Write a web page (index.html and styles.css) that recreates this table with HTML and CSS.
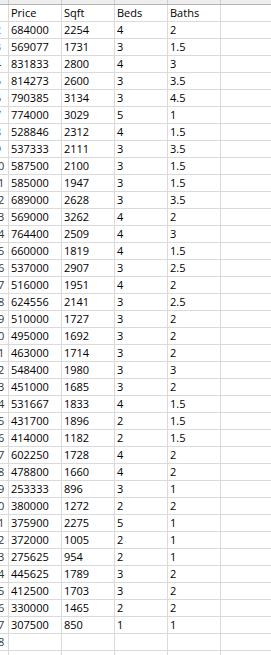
FILE: index.html
```html
<!DOCTYPE html>
<html>
<head>
<meta charset="utf-8">
<link rel="stylesheet" href="styles.css">
</head>
<body>
<div class="sheet">
  <div class="row strip"><div class="rn"></div><div class="c"></div><div class="c"></div><div class="c"></div><div class="c"></div><div class="c last"></div></div>
  <div class="row"><div class="rn"><span>1</span></div><div class="c">Price</div><div class="c">Sqft</div><div class="c">Beds</div><div class="c">Baths</div><div class="c last"></div></div>
  <div class="row"><div class="rn"><span>2</span></div><div class="c">684000</div><div class="c">2254</div><div class="c">4</div><div class="c">2</div><div class="c last"></div></div>
  <div class="row"><div class="rn"><span>3</span></div><div class="c">569077</div><div class="c">1731</div><div class="c">3</div><div class="c">1.5</div><div class="c last"></div></div>
  <div class="row"><div class="rn"><span>4</span></div><div class="c">831833</div><div class="c">2800</div><div class="c">4</div><div class="c">3</div><div class="c last"></div></div>
  <div class="row"><div class="rn"><span>5</span></div><div class="c">814273</div><div class="c">2600</div><div class="c">3</div><div class="c">3.5</div><div class="c last"></div></div>
  <div class="row"><div class="rn"><span>6</span></div><div class="c">790385</div><div class="c">3134</div><div class="c">3</div><div class="c">4.5</div><div class="c last"></div></div>
  <div class="row"><div class="rn"><span>7</span></div><div class="c">774000</div><div class="c">3029</div><div class="c">5</div><div class="c">1</div><div class="c last"></div></div>
  <div class="row"><div class="rn"><span>8</span></div><div class="c">528846</div><div class="c">2312</div><div class="c">4</div><div class="c">1.5</div><div class="c last"></div></div>
  <div class="row"><div class="rn"><span>9</span></div><div class="c">537333</div><div class="c">2111</div><div class="c">3</div><div class="c">3.5</div><div class="c last"></div></div>
  <div class="row"><div class="rn"><span>10</span></div><div class="c">587500</div><div class="c">2100</div><div class="c">3</div><div class="c">1.5</div><div class="c last"></div></div>
  <div class="row"><div class="rn"><span>11</span></div><div class="c">585000</div><div class="c">1947</div><div class="c">3</div><div class="c">1.5</div><div class="c last"></div></div>
  <div class="row"><div class="rn"><span>12</span></div><div class="c">689000</div><div class="c">2628</div><div class="c">3</div><div class="c">3.5</div><div class="c last"></div></div>
  <div class="row"><div class="rn"><span>13</span></div><div class="c">569000</div><div class="c">3262</div><div class="c">4</div><div class="c">2</div><div class="c last"></div></div>
  <div class="row"><div class="rn"><span>14</span></div><div class="c">764400</div><div class="c">2509</div><div class="c">4</div><div class="c">3</div><div class="c last"></div></div>
  <div class="row"><div class="rn"><span>15</span></div><div class="c">660000</div><div class="c">1819</div><div class="c">4</div><div class="c">1.5</div><div class="c last"></div></div>
  <div class="row"><div class="rn"><span>16</span></div><div class="c">537000</div><div class="c">2907</div><div class="c">3</div><div class="c">2.5</div><div class="c last"></div></div>
  <div class="row"><div class="rn"><span>17</span></div><div class="c">516000</div><div class="c">1951</div><div class="c">4</div><div class="c">2</div><div class="c last"></div></div>
  <div class="row"><div class="rn"><span>18</span></div><div class="c">624556</div><div class="c">2141</div><div class="c">3</div><div class="c">2.5</div><div class="c last"></div></div>
  <div class="row"><div class="rn"><span>19</span></div><div class="c">510000</div><div class="c">1727</div><div class="c">3</div><div class="c">2</div><div class="c last"></div></div>
  <div class="row"><div class="rn"><span>20</span></div><div class="c">495000</div><div class="c">1692</div><div class="c">3</div><div class="c">2</div><div class="c last"></div></div>
  <div class="row"><div class="rn"><span>21</span></div><div class="c">463000</div><div class="c">1714</div><div class="c">3</div><div class="c">2</div><div class="c last"></div></div>
  <div class="row"><div class="rn"><span>22</span></div><div class="c">548400</div><div class="c">1980</div><div class="c">3</div><div class="c">3</div><div class="c last"></div></div>
  <div class="row"><div class="rn"><span>23</span></div><div class="c">451000</div><div class="c">1685</div><div class="c">3</div><div class="c">2</div><div class="c last"></div></div>
  <div class="row"><div class="rn"><span>24</span></div><div class="c">531667</div><div class="c">1833</div><div class="c">4</div><div class="c">1.5</div><div class="c last"></div></div>
  <div class="row"><div class="rn"><span>25</span></div><div class="c">431700</div><div class="c">1896</div><div class="c">2</div><div class="c">1.5</div><div class="c last"></div></div>
  <div class="row"><div class="rn"><span>26</span></div><div class="c">414000</div><div class="c">1182</div><div class="c">2</div><div class="c">1.5</div><div class="c last"></div></div>
  <div class="row"><div class="rn"><span>27</span></div><div class="c">602250</div><div class="c">1728</div><div class="c">4</div><div class="c">2</div><div class="c last"></div></div>
  <div class="row"><div class="rn"><span>28</span></div><div class="c">478800</div><div class="c">1660</div><div class="c">4</div><div class="c">2</div><div class="c last"></div></div>
  <div class="row"><div class="rn"><span>29</span></div><div class="c">253333</div><div class="c">896</div><div class="c">3</div><div class="c">1</div><div class="c last"></div></div>
  <div class="row"><div class="rn"><span>30</span></div><div class="c">380000</div><div class="c">1272</div><div class="c">2</div><div class="c">2</div><div class="c last"></div></div>
  <div class="row"><div class="rn"><span>31</span></div><div class="c">375900</div><div class="c">2275</div><div class="c">5</div><div class="c">1</div><div class="c last"></div></div>
  <div class="row"><div class="rn"><span>32</span></div><div class="c">372000</div><div class="c">1005</div><div class="c">2</div><div class="c">1</div><div class="c last"></div></div>
  <div class="row"><div class="rn"><span>33</span></div><div class="c">275625</div><div class="c">954</div><div class="c">2</div><div class="c">1</div><div class="c last"></div></div>
  <div class="row"><div class="rn"><span>34</span></div><div class="c">445625</div><div class="c">1789</div><div class="c">3</div><div class="c">2</div><div class="c last"></div></div>
  <div class="row"><div class="rn"><span>35</span></div><div class="c">412500</div><div class="c">1703</div><div class="c">3</div><div class="c">2</div><div class="c last"></div></div>
  <div class="row"><div class="rn"><span>36</span></div><div class="c">330000</div><div class="c">1465</div><div class="c">2</div><div class="c">2</div><div class="c last"></div></div>
  <div class="row"><div class="rn"><span>37</span></div><div class="c">307500</div><div class="c">850</div><div class="c">1</div><div class="c">1</div><div class="c last"></div></div>
  <div class="row"><div class="rn"><span>38</span></div><div class="c"></div><div class="c"></div><div class="c"></div><div class="c"></div><div class="c last"></div></div>
  <div class="row"><div class="rn"><span>39</span></div><div class="c"></div><div class="c"></div><div class="c"></div><div class="c"></div><div class="c last"></div></div>
</div>
</body>
</html>
```

FILE: styles.css
```css
html, body {
  margin: 0;
  padding: 0;
  background: #ffffff;
  overflow: hidden;
}
.sheet {
  width: 271px;
  height: 655px;
  overflow: hidden;
  font-family: "Open Sans", "Noto Sans", sans-serif;
  font-size: 11px;
  color: #000000;
}
.row {
  display: grid;
  grid-template-columns: 9px 53px 53px 53px 53px 1fr;
  height: 16px;
  line-height: 16px;
  border-bottom: 1px solid #dadada;
}
.row.strip {
  height: 4px;
  background: #eeeeee;
  border-bottom: 1px solid #b4b4b4;
}
.rn {
  border-right: 1px solid #dadada;
  overflow: hidden;
  display: flex;
  background: #ffffff;
  color: #333333;
}
.strip .rn {
  background: #eeeeee;
  border-right-color: #d0d0d0;
}
.rn span {
  flex: none;
  width: 30px;
  margin-left: -17px;
  text-align: center;
}
.c {
  border-right: 1px solid #dadada;
  padding-left: 2px;
  white-space: nowrap;
  overflow: hidden;
}
.strip .c {
  border-right-color: #d0d0d0;
}
.c.last {
  border-right: none;
}
```
